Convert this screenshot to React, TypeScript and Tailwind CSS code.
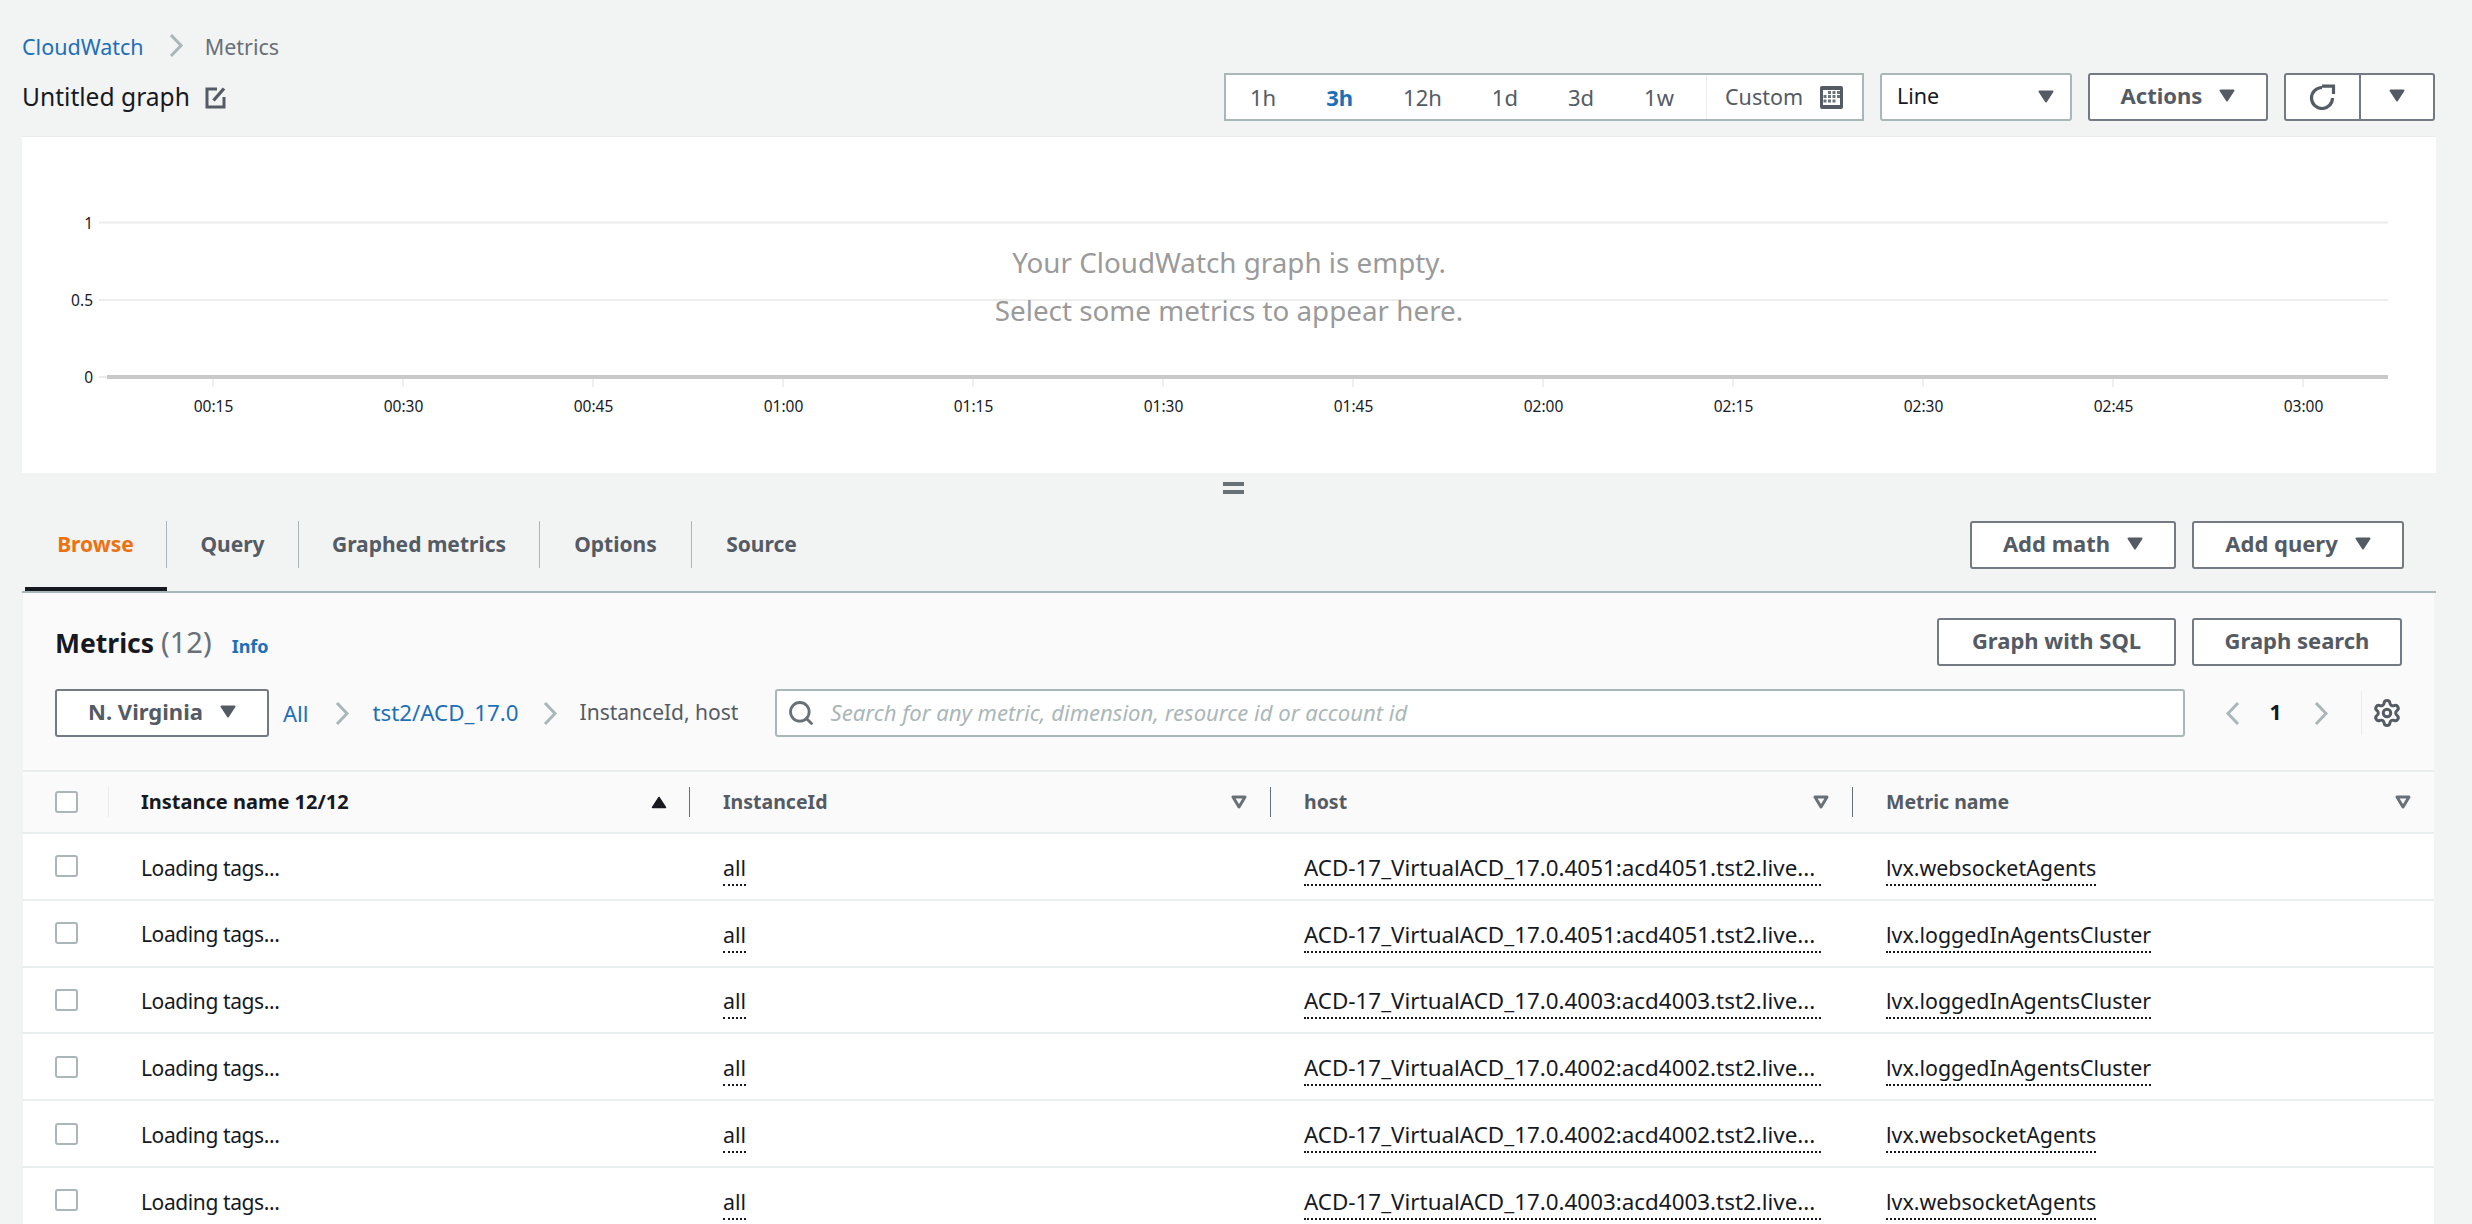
import { Search, Settings } from 'lucide-react';

const ranges = ['1h', '3h', '12h', '1d', '3d', '1w'];
const tabs = [
  { label: 'Browse', width: 'w-[142px]' },
  { label: 'Query', width: 'w-[132px]' },
  { label: 'Graphed metrics', width: 'w-[241px]' },
  { label: 'Options', width: 'w-[152px]' },
  { label: 'Source', width: 'w-[139px]' },
];
const ticks = ['00:15', '00:30', '00:45', '01:00', '01:15', '01:30', '01:45', '02:00', '02:15', '02:30', '02:45', '03:00'];

const rows = [
  { host: 'ACD-17_VirtualACD_17.0.4051:acd4051.tst2.live...', metric: 'lvx.websocketAgents' },
  { host: 'ACD-17_VirtualACD_17.0.4051:acd4051.tst2.live...', metric: 'lvx.loggedInAgentsCluster' },
  { host: 'ACD-17_VirtualACD_17.0.4003:acd4003.tst2.live...', metric: 'lvx.loggedInAgentsCluster' },
  { host: 'ACD-17_VirtualACD_17.0.4002:acd4002.tst2.live...', metric: 'lvx.loggedInAgentsCluster' },
  { host: 'ACD-17_VirtualACD_17.0.4002:acd4002.tst2.live...', metric: 'lvx.websocketAgents' },
  { host: 'ACD-17_VirtualACD_17.0.4003:acd4003.tst2.live...', metric: 'lvx.websocketAgents' },
];

const Caret = () => (
  <svg width="16" height="13" viewBox="0 0 16 13" className="shrink-0">
    <path d="M1.5 1.5h13L8 11.5z" fill="#545b64" stroke="#545b64" strokeWidth="2" strokeLinejoin="round" />
  </svg>
);

const FilterIcon = () => (
  <svg width="16" height="14" viewBox="0 0 16 14" className="shrink-0">
    <path d="M2 2h12L8 12z" fill="none" stroke="#687078" strokeWidth="3" strokeLinejoin="round" />
  </svg>
);

const SortUp = () => (
  <svg width="16" height="13" viewBox="0 0 16 13" className="shrink-0">
    <path d="M8 1.5 14.5 11.5h-13z" fill="#16191f" stroke="#16191f" strokeWidth="1.5" strokeLinejoin="round" />
  </svg>
);

const Chevron = ({ left = false }: { left?: boolean }) => (
  <svg width="15" height="25" viewBox="0 0 15 25" className="shrink-0 block">
    <path d={left ? 'M13 2 3 12.5 13 23' : 'M2 2l10 10.5L2 23'} fill="none" stroke="#aab7b8" strokeWidth="3" />
  </svg>
);

const EditIcon = () => (
  <svg width="21" height="23" viewBox="0 0 21 23" className="shrink-0 block">
    <path d="M12 3H2v18h17V11" fill="none" stroke="#545b64" strokeWidth="3" />
    <path d="M8.5 14.5 19 2.5" fill="none" stroke="#545b64" strokeWidth="3.4" />
  </svg>
);

const CalendarIcon = () => {
  const cells = [
    [9, 6], [13.5, 6], [18, 6],
    [4.5, 10], [9, 10], [13.5, 10], [18, 10],
    [4.5, 14.5], [9, 14.5], [13.5, 14.5],
  ];
  return (
    <svg width="23" height="23" viewBox="0 0 23 23" className="shrink-0">
      <rect width="23" height="23" rx="2" fill="#545b64" />
      <rect x="3" y="4" width="17" height="15" fill="#fff" />
      {cells.map(([x, y]) => (
        <rect key={`${x}-${y}`} x={x - 1} y={y - 1} width="3" height="3" fill="#545b64" opacity="0.85" />
      ))}
    </svg>
  );
};

const RefreshIcon = () => (
  <svg width="27" height="27" viewBox="0 0 27 27" className="shrink-0">
    <path d="M23.5 15A10.5 10.5 0 1 1 13 4.5" fill="none" stroke="#545b64" strokeWidth="3.2" />
    <path d="M13 3.2H24.5V11" fill="none" stroke="#545b64" strokeWidth="3.2" />
  </svg>
);

const Button = ({ label, caret = false, className = '' }: { label: string; caret?: boolean; className?: string }) => (
  <button className={`h-[48px] pb-[3px] flex items-center justify-center gap-[17px] bg-white border-2 border-[#737a83] rounded-[3px] text-[22px] font-bold text-[#545b64] ${className}`}>
    {label}
    {caret && <Caret />}
  </button>
);

const Checkbox = () => (
  <div className="w-[23px] h-[22px] shrink-0 bg-white border-2 border-[#aab7b8] rounded-[3px]" />
);

const HeadCell = ({ label, last = false }: { label: string; last?: boolean }) => (
  <div className={`flex items-center text-[19.5px] font-bold text-[#545b64] ${last ? 'pr-[23px]' : 'pr-[33px]'}`}>
    <span className="flex-1">{label}</span>
    <FilterIcon />
    {!last && <div className="ml-[23px] w-px h-[30px] bg-[#687078]" />}
  </div>
);

const Graph = () => (
  <div className="relative h-[336px] bg-white">
    <svg width="2414" height="336" viewBox="0 0 2414 336" className="block">
      {[85.5, 163].map((y) => (
        <rect key={y} x="77" y={y - 1} width="2289" height="2" fill="#ececec" />
      ))}
      <rect x="85" y="238" width="2281" height="4" fill="#c9c9c9" />
      <rect x="77" y="239" width="8" height="2" fill="#ececec" />
      {[['1', 86], ['0.5', 163], ['0', 240]].map(([label, y]) => (
        <text key={label} x="71" y={Number(y) + 5.5} textAnchor="end" fontSize="15.5" fill="#16191f" fontFamily="Noto Sans, sans-serif">
          {label}
        </text>
      ))}
      {ticks.map((label, i) => (
        <g key={label}>
          <rect x={190.5 + i * 190} y="242" width="1" height="8" fill="#e0e0e0" />
          <text x={191.5 + i * 190} y="274.5" textAnchor="middle" fontSize="15.5" fill="#16191f" fontFamily="Noto Sans, sans-serif">
            {label}
          </text>
        </g>
      ))}
    </svg>
    <div className="absolute inset-0 pb-[38px] flex flex-col items-center justify-center text-[27.8px] leading-[48px] text-[#9a9a9a]">
      <div>Your CloudWatch graph is empty.</div>
      <div>Select some metrics to appear here.</div>
    </div>
  </div>
);

const App = () => {
  return (
    <div className="h-[1224px] overflow-hidden bg-[#f2f3f3] pl-[22px] pt-[30px] font-['Noto_Sans',sans-serif] text-[#16191f]">
      <div className="w-[2414px]">
        <div className="h-[34px] flex items-center text-[21.5px]">
          <span className="text-[#1d6fb8]">CloudWatch</span>
          <span className="ml-[25px] mr-[21px] -mt-[3px]"><Chevron /></span>
          <span className="text-[#687078]">Metrics</span>
        </div>

        <div className="mt-[9px] h-[48px] flex items-center">
          <span className="text-[24.6px]">Untitled graph</span>
          <span className="ml-[15px]"><EditIcon /></span>

          <div className="ml-auto mr-px flex items-center">
            <div className="w-[640px] h-[48px] flex items-center bg-white border-2 border-[#aab7b8] text-[22px] text-[#545b64]">
              <div className="flex items-center -ml-px w-[481px]">
                {ranges.map((r) => (
                  <span key={r} className={`px-[25px] ${r === '3h' ? 'font-bold text-[#1d6fb8]' : ''}`}>
                    {r}
                  </span>
                ))}
              </div>
              <div className="flex-1 h-full flex items-center pl-[18px] gap-[17px] border-l border-[#eaeded] text-[21.5px]">
                Custom
                <CalendarIcon />
              </div>
            </div>

            <div className="ml-[16px] w-[192px] h-[48px] flex items-center justify-between pl-[15px] pr-[16px] pb-[2px] bg-white border-2 border-[#aab7b8] rounded-[3px] text-[21.5px]">
              Line
              <Caret />
            </div>

            <Button label="Actions" caret className="ml-[16px] w-[180px]" />

            <div className="ml-[16px] flex">
              <button className="w-[77px] h-[48px] pb-[2px] flex items-center justify-center bg-white border-2 border-[#737a83] rounded-l-[3px]">
                <RefreshIcon />
              </button>
              <button className="w-[76px] h-[48px] pb-[3px] -ml-[2px] flex items-center justify-center bg-white border-2 border-[#737a83] rounded-r-[3px]">
                <Caret />
              </button>
            </div>
          </div>
        </div>

        <div className="mt-[15px] border-t border-[#eaeded]">
          <Graph />
        </div>

        <div className="h-[48px] pt-[9px] pl-[1201px]">
          <div className="w-[21px] h-[4px] bg-[#687078]" />
          <div className="w-[21px] h-[4px] mt-[4px] bg-[#687078]" />
        </div>

        <div className="h-[72px] pl-[3px] pr-[32px] flex justify-between border-b-2 border-[#aab7b8]">
          <div className="flex">
            {tabs.map((t, i) => (
              <div key={t.label} className={`flex flex-col ${t.width}`}>
                <div className={`h-[48px] pt-px flex items-center justify-center text-[21px] font-bold ${i === 0 ? 'text-[#ec7211]' : 'text-[#545b64]'} ${i < tabs.length - 1 ? 'border-r border-[#aab7b8]' : ''}`}>
                  {t.label}
                </div>
                <div className={`mt-[19px] h-[4px] ${i === 0 ? 'bg-[#16191f]' : ''}`} />
              </div>
            ))}
          </div>
          <div className="flex gap-[16px]">
            <Button label="Add math" caret className="w-[206px]" />
            <Button label="Add query" caret className="w-[212px]" />
          </div>
        </div>

        <div className="ml-px w-[2411px] bg-[#fafafa]">
          <div className="px-[32px] pt-[25px] pb-[33px]">
            <div className="flex items-center justify-between">
              <div className="flex items-baseline">
                <span className="text-[26.5px] font-bold">Metrics</span>
                <span className="ml-[7px] text-[29px] text-[#687078]">(12)</span>
                <span className="ml-[20px] text-[18px] font-bold text-[#1d6fb8]">Info</span>
              </div>
              <div className="flex gap-[16px]">
                <Button label="Graph with SQL" className="w-[239px]" />
                <Button label="Graph search" className="w-[210px]" />
              </div>
            </div>

            <div className="mt-[23px] flex items-center">
              <Button label="N. Virginia" caret className="w-[214px]" />
              <span className="ml-[14px] text-[22px] text-[#1d6fb8]">All</span>
              <span className="ml-[27px] mr-[22px]"><Chevron /></span>
              <span className="text-[22.3px] text-[#1d6fb8]">tst2/ACD_17.0</span>
              <span className="ml-[24px] mr-[22px]"><Chevron /></span>
              <span className="w-[160px] whitespace-nowrap text-[21px] text-[#545b64]">InstanceId, host</span>
              <div className="ml-[35px] w-[1410px] h-[48px] flex items-center gap-[16px] pl-[10px] bg-white border-2 border-[#aab7b8] rounded-[3px]">
                <Search size={28} strokeWidth={2.4} color="#687078" />
                <span className="text-[22.1px] italic text-[#aab7b8]">Search for any metric, dimension, resource id or account id</span>
              </div>
              <div className="ml-[40px]"><Chevron left /></div>
              <span className="ml-[30px] w-[13px] text-[21px] font-bold">1</span>
              <div className="ml-[31px]"><Chevron /></div>
              <div className="ml-[32px] h-[44px] w-px bg-[#eaeded]" />
              <div className="ml-[10px]"><Settings size={30} strokeWidth={2.4} color="#545b64" /></div>
            </div>
          </div>

          <div className="grid grid-cols-[118px_582px_581px_582px_1fr] h-[64px] border-y-2 border-[#eaeded]">
            <div className="flex items-center pl-[32px]">
              <Checkbox />
              <div className="ml-[30px] w-px h-[30px] bg-[#eaeded]" />
            </div>
            <div className="flex items-center pr-[33px] text-[20px] font-bold">
              <span className="flex-1">Instance name 12/12</span>
              <SortUp />
              <div className="ml-[22px] w-px h-[30px] bg-[#687078]" />
            </div>
            <HeadCell label="InstanceId" />
            <HeadCell label="host" />
            <HeadCell label="Metric name" last />
          </div>

          {rows.map((row, i) => (
            <div key={i} className="grid grid-cols-[118px_582px_581px_582px_1fr] h-[66.8px] items-center bg-white border-b-2 border-[#eaeded] text-[21.4px]">
              <div className="pl-[32px]"><Checkbox /></div>
              <div className="pt-[4px] text-[21px] tracking-[-0.4px]">Loading tags...</div>
              <div className="pt-[5px]">
                <span className="inline-block border-b-2 border-dotted border-[#16191f] leading-[32px]">all</span>
              </div>
              <div className="pt-[5px]">
                <span className="block w-[517px] whitespace-nowrap border-b-2 border-dotted border-[#16191f] text-[22.4px] leading-[32px]">{row.host}</span>
              </div>
              <div className="pt-[5px]">
                <span className="inline-block border-b-2 border-dotted border-[#16191f] leading-[32px]">{row.metric}</span>
              </div>
            </div>
          ))}
        </div>
      </div>
    </div>
  );
};

export default App;
